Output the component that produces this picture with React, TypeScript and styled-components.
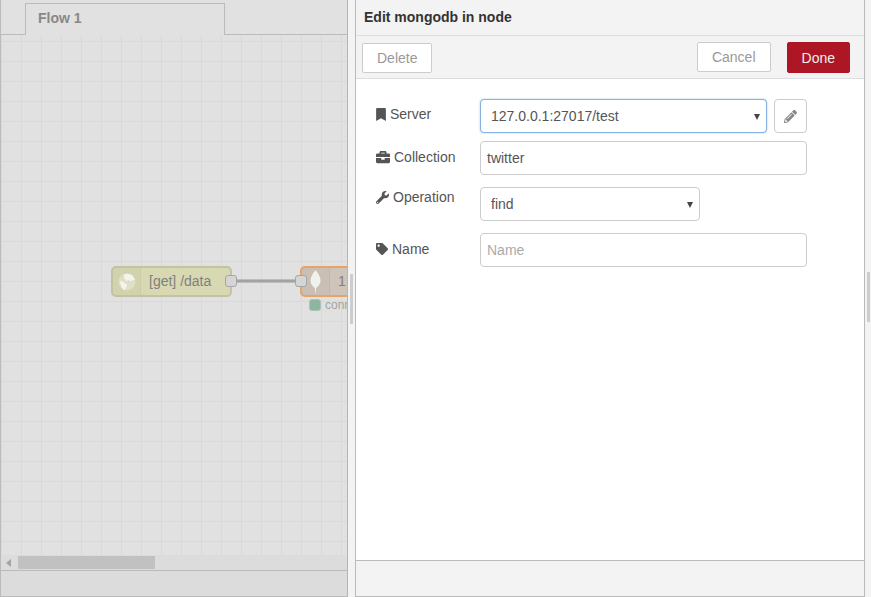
import * as React from 'react';
import styled, { createGlobalStyle } from 'styled-components';
import { FaBookmark, FaBriefcase, FaPencilAlt, FaTag, FaWrench } from 'react-icons/fa';

const GlobalStyle = createGlobalStyle`
	html, body {
		margin: 0;
		padding: 0;
		background: #f3f3f3;
	}
	* {
		box-sizing: border-box;
	}
`;

const Page = styled.div`
	display: flex;
	width: 871px;
	height: 597px;
	overflow: hidden;
	font-family: 'Liberation Sans', Arial, sans-serif;
	font-size: 14px;
	color: #555;
`;

const Workspace = styled.div`
	display: flex;
	flex-direction: column;
	width: 348px;
	flex: none;
	background: #dcdcdc;
	border-left: 1px solid #bbb;
	border-right: 1px solid #b5b5b5;
	border-bottom: 1px solid #bbb;
`;

const TabBar = styled.div`
	height: 35px;
	flex: none;
	padding: 3px 0 0 24px;
	background: #e1e1e1;
	border-bottom: 1px solid #bbb;
`;

const Tab = styled.div`
	width: 200px;
	height: 32px;
	padding: 0 12px;
	line-height: 28px;
	font-weight: bold;
	color: #888;
	background: #e1e1e1;
	border: 1px solid #bbb;
	border-bottom: none;
`;

const Canvas = styled.div`
	position: relative;
	flex: 1;
	overflow: hidden;
	background-color: #e1e1e1;
	background-image:
		linear-gradient(#d9d9d9 1px, transparent 1px),
		linear-gradient(90deg, #d9d9d9 1px, transparent 1px);
	background-size: 20px 20px;
	background-position: 0 6px;
`;

const Node = styled.div<{ $x: number; $width: number; $fill: string; $stroke: string }>`
	position: absolute;
	left: ${p => p.$x}px;
	top: 231px;
	width: ${p => p.$width}px;
	height: 31px;
	display: flex;
	background: ${p => p.$fill};
	border: 2px solid ${p => p.$stroke};
	border-radius: 5px;
	color: #808080;
	font-size: 14px;
	line-height: 27px;
`;

const NodeIcon = styled.div`
	width: 28px;
	flex: none;
	display: flex;
	align-items: center;
	justify-content: center;
	background: rgba(0, 0, 0, 0.025);
	border-right: 1px solid rgba(0, 0, 0, 0.03);
`;

const NodeLabel = styled.div`
	padding-left: 8px;
	white-space: nowrap;
`;

const Port = styled.div<{ $x: number }>`
	position: absolute;
	left: ${p => p.$x}px;
	top: 240px;
	width: 12px;
	height: 12px;
	background: #d5d5d5;
	border: 1px solid #a5a5a5;
	border-radius: 3px;
`;

const Wire = styled.div`
	position: absolute;
	left: 233px;
	top: 244px;
	width: 62px;
	height: 4px;
	background: #a3a3a3;
	border-top: 1px solid #bdbdbd;
	border-bottom: 1px solid #bdbdbd;
`;

const NodeStatus = styled.div`
	position: absolute;
	left: 308px;
	top: 263px;
	display: flex;
	align-items: center;
	gap: 4px;
	font-size: 12px;
	color: #a4a4a4;
	white-space: nowrap;
`;

const StatusDot = styled.span`
	width: 12px;
	height: 12px;
	background: #8db5a0;
	border: 1px solid #a8c4b4;
	border-radius: 3px;
`;

const HScroll = styled.div`
	display: flex;
	align-items: center;
	height: 16px;
	flex: none;
	background: #dcdcdc;
	border-bottom: 1px solid #bbb;
	padding-left: 5px;
`;

const ScrollArrow = styled.span`
	width: 0;
	height: 0;
	border-top: 4px solid transparent;
	border-bottom: 4px solid transparent;
	border-right: 5px solid #a3a3a3;
`;

const ScrollThumb = styled.div`
	width: 137px;
	height: 13px;
	margin-left: 7px;
	background: #c1c1c1;
`;

const WorkspaceFooter = styled.div`
	height: 25px;
	flex: none;
	background: #dcdcdc;
`;

const Handle = styled.div<{ $width: number; $pad: number; $lift?: number }>`
	width: ${p => p.$width}px;
	flex: none;
	display: flex;
	align-items: center;
	padding-left: ${p => p.$pad}px;
	padding-bottom: ${p => p.$lift || 0}px;
	background: #f3f3f3;
`;

const Grip = styled.div`
	width: 3px;
	height: 50px;
	background: #cdcdcd;
`;

const Tray = styled.div`
	display: flex;
	flex-direction: column;
	width: 510px;
	flex: none;
	background: #fff;
	border-left: 1px solid #bbb;
	border-right: 1px solid #bbb;
	border-bottom: 1px solid #bbb;
`;

const TrayTitle = styled.div`
	height: 36px;
	flex: none;
	padding: 0 8px;
	line-height: 35px;
	font-size: 14px;
	font-weight: bold;
	color: #333;
	background: #f3f3f3;
	border-bottom: 1px solid #ddd;
`;

const TrayToolbar = styled.div`
	display: flex;
	align-items: flex-start;
	height: 43px;
	flex: none;
	padding: 6px 14px 0 6px;
	background: #f3f3f3;
	border-bottom: 1px solid #ddd;
`;

const ToolButton = styled.button<{ $primary?: boolean; $nudge?: number }>`
	height: ${p => (p.$primary ? 31 : 30)}px;
	padding: 0 14px;
	margin-top: ${p => p.$nudge || 0}px;
	margin-left: ${p => (p.$primary ? 16 : 0)}px;
	font-family: inherit;
	font-size: 14px;
	color: ${p => (p.$primary ? '#eee' : '#999')};
	background: ${p => (p.$primary ? '#ad1625' : '#fff')};
	border: 1px solid ${p => (p.$primary ? '#ad1625' : '#ccc')};
	border-radius: 2px;
`;

const Spacer = styled.div`
	flex: 1;
`;

const TrayBody = styled.div`
	display: flex;
	flex-direction: column;
	flex: 1;
	padding: 20px;
`;

const FormRow = styled.div<{ $gap?: number }>`
	display: flex;
	align-items: flex-start;
	margin-bottom: ${p => p.$gap || 0}px;
`;

const FieldLabel = styled.label<{ $offset: number }>`
	display: flex;
	align-items: center;
	gap: 4px;
	width: 104px;
	flex: none;
	padding-top: ${p => p.$offset}px;
	line-height: 20px;
	color: #555;
`;

const BookmarkIcon = styled(FaBookmark)`
	width: 10px;
	height: 13px;
`;

const field = `
	height: 34px;
	padding: 0 6px;
	font-family: inherit;
	font-size: 14px;
	color: #555;
	background: #fff;
	border: 1px solid #ccc;
	border-radius: 4px;
	outline: none;
`;

const TextField = styled.input<{ $width: number }>`
	${field}
	width: ${p => p.$width}px;

	&::placeholder {
		color: #aaa;
		opacity: 1;
	}
`;

const SelectWrap = styled.div<{ $width: number }>`
	position: relative;
	width: ${p => p.$width}px;

	&::after {
		content: '';
		position: absolute;
		right: 7px;
		top: 15px;
		border-left: 3.5px solid transparent;
		border-right: 3.5px solid transparent;
		border-top: 6px solid #444;
		pointer-events: none;
	}
`;

const SelectField = styled.select<{ $focused?: boolean }>`
	${field}
	display: block;
	width: 100%;
	padding-left: 10px;
	appearance: none;
	border-color: ${p => (p.$focused ? '#85b1e0' : '#ccc')};
	box-shadow: ${p => (p.$focused ? '0 0 2px rgba(82, 140, 210, 0.5)' : 'none')};
`;

const EditButton = styled.button`
	display: flex;
	align-items: center;
	justify-content: center;
	width: 33px;
	height: 34px;
	margin-left: 7px;
	padding: 0;
	color: #888;
	font-size: 13px;
	background: #fff;
	border: 1px solid #ccc;
	border-radius: 4px;
`;

const TrayFooter = styled.div`
	height: 36px;
	flex: none;
	background: #f3f3f3;
	border-top: 1px solid #bbb;
`;

// the inject node's globe: pale land on a see-through sphere
const GlobeGlyph = () => (
	<svg width="18" height="18" viewBox="0 0 18 18">
		<circle cx="9" cy="9" r="8.500" fill="#ecece0" opacity="0.5" />
		<path
			d="M6 1.200C8 .4 11 .4 13 1.500c2 1.200 3.600 3.500 4 5.500-1-.5-2-.4-2.800.5-.7.9-2 .9-2.700 0-.8-.8-1.700-.5-2.500.2-.6.6-1.500.2-1.500-.7 0-.8-1-1-1.500-1.700C5.500 4.200 6.800 3 6 1.200zM2 8.500c1.500-.5 3.200.2 4.200 1.200 1 1 2.300 1.300 2.800 2.300.4 1-.5 1.800-1 2.700-.4.800-.5 1.800-1.200 2.300C5 16.500 3.800 15 3.500 13.500 3.200 12 1.800 10.300 2 8.500z"
			fill="#f4f4ec"
		/>
	</svg>
);

const LeafGlyph = () => (
	<svg width="11" height="23" viewBox="0 0 11 23">
		<path
			d="M5.500 0C2.500 4 .5 7 .5 10.500c0 3.500 1.800 5.500 4.400 7.500L5.200 23h.6l.3-5c2.600-2 4.400-4 4.400-7.500C10.500 7 8.500 4 5.500 0z"
			fill="#f1f1ee"
		/>
	</svg>
);

export default function App() {
	return (
		<React.Fragment>
			<GlobalStyle />
			<Page>
				<Workspace>
					<TabBar>
						<Tab>Flow 1</Tab>
					</TabBar>
					<Canvas>
						<Wire />
						<Node $x={110} $width={121} $fill="#d8d8b2" $stroke="#c2c2a4">
							<NodeIcon>
								<GlobeGlyph />
							</NodeIcon>
							<NodeLabel>[get] /data</NodeLabel>
						</Node>
						<Node $x={299} $width={80} $fill="#cec4b9" $stroke="#e7a468">
							<NodeIcon>
								<LeafGlyph />
							</NodeIcon>
							<NodeLabel>1</NodeLabel>
						</Node>
						<Port $x={224} />
						<Port $x={294} />
						<NodeStatus>
							<StatusDot />
							connected
						</NodeStatus>
					</Canvas>
					<HScroll>
						<ScrollArrow />
						<ScrollThumb />
					</HScroll>
					<WorkspaceFooter />
				</Workspace>
				<Handle $width={7} $pad={2}>
					<Grip />
				</Handle>
				<Tray>
					<TrayTitle>Edit mongodb in node</TrayTitle>
					<TrayToolbar>
						<ToolButton $nudge={1}>Delete</ToolButton>
						<Spacer />
						<ToolButton>Cancel</ToolButton>
						<ToolButton $primary>Done</ToolButton>
					</TrayToolbar>
					<TrayBody>
						<FormRow $gap={8}>
							<FieldLabel $offset={5}>
								<BookmarkIcon />
								Server
							</FieldLabel>
							<SelectWrap $width={287}>
								<SelectField $focused defaultValue="a">
									<option value="a">127.0.0.1:27017/test</option>
								</SelectField>
							</SelectWrap>
							<EditButton aria-label="Edit server">
								<FaPencilAlt />
							</EditButton>
						</FormRow>
						<FormRow $gap={12}>
							<FieldLabel $offset={6}>
								<FaBriefcase size={14} />
								Collection
							</FieldLabel>
							<TextField $width={327} defaultValue="twitter" />
						</FormRow>
						<FormRow $gap={12}>
							<FieldLabel $offset={0}>
								<FaWrench size={13} />
								Operation
							</FieldLabel>
							<SelectWrap $width={220}>
								<SelectField defaultValue="find">
									<option value="find">find</option>
								</SelectField>
							</SelectWrap>
						</FormRow>
						<FormRow>
							<FieldLabel $offset={6}>
								<FaTag size={12} />
								Name
							</FieldLabel>
							<TextField $width={327} placeholder="Name" />
						</FormRow>
					</TrayBody>
					<TrayFooter />
				</Tray>
				<Handle $width={6} $pad={2} $lift={4}>
					<Grip />
				</Handle>
			</Page>
		</React.Fragment>
	);
}
